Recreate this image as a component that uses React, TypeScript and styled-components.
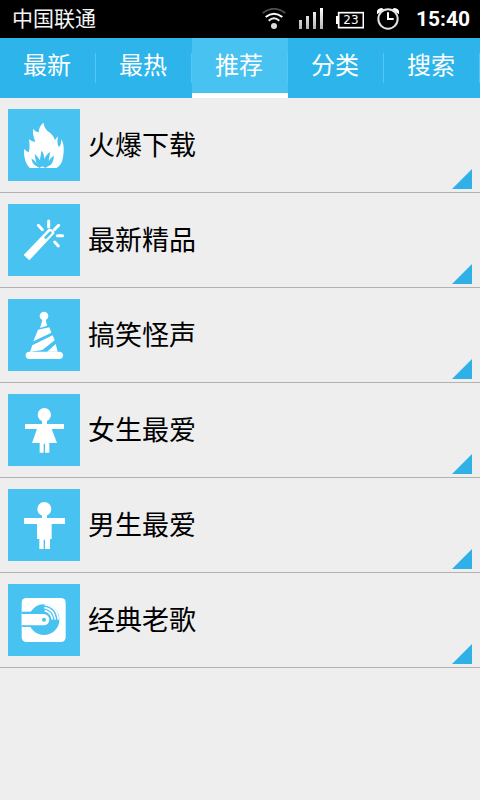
import React, { useState } from "react";
import styled, { createGlobalStyle } from "styled-components";

const GlobalStyle = createGlobalStyle`
  *, *::before, *::after { box-sizing: border-box; }
  body {
    margin: 0;
    background: #eeeeee;
    color: #000000;
    font-family: Roboto, "Noto Sans CJK SC", sans-serif;
  }
`;

const Page = styled.div`
  display: flex;
  flex-direction: column;
  min-height: 100vh;
`;

const StatusBar = styled.header`
  display: flex;
  align-items: center;
  justify-content: space-between;
  height: 38px;
  padding: 0 10px 0 12px;
  background: #000000;
  color: #f4f4f4;
`;

const Carrier = styled.span`
  font-size: 21px;
  line-height: 36px;
`;

const StatusIcons = styled.div`
  display: flex;
  align-items: center;
  gap: 13px;
`;

const StatusIcon = styled.svg<{ $width: number }>`
  display: block;
  width: ${(p) => p.$width}px;
  height: 22px;
`;

const Clock = styled.time`
  margin-left: 4px;
  font-family: Roboto, "Liberation Sans", sans-serif;
  font-size: 21px;
  line-height: 40px;
  font-weight: 700;
  color: #ffffff;
`;

const TabBar = styled.nav`
  display: grid;
  grid-template-columns: repeat(5, 1fr);
  height: 60px;
  background: #2db5eb;
`;

const Tab = styled.button<{ $active: boolean }>`
  position: relative;
  border: 0;
  border-bottom: 5px solid ${(p) => (p.$active ? "#ffffff" : "transparent")};
  padding: 0 2px 0 0;
  background: ${(p) => (p.$active ? "#48c2f1" : "#2db5eb")};
  color: #ffffff;
  font-family: inherit;
  font-size: 24px;
  line-height: 54px;
  cursor: pointer;

  &::after {
    content: "";
    position: absolute;
    top: 15px;
    right: 0;
    width: 1px;
    height: 30px;
    background: #56c6f2;
  }
`;

const List = styled.ul`
  margin: 0;
  padding: 0;
  list-style: none;
`;

const Row = styled.li`
  border-bottom: 1px solid #b2b2b2;
`;

const RowLink = styled.a`
  position: relative;
  display: flex;
  align-items: center;
  gap: 8px;
  height: 94px;
  padding: 0 8px;
  color: #000000;
  text-decoration: none;
`;

const Tile = styled.svg`
  flex: none;
  width: 72px;
  height: 72px;
  background: #48c2f1;
`;

const RowTitle = styled.span`
  font-size: 27px;
  line-height: 40px;
  padding-top: 1px;
`;

const Corner = styled.span`
  position: absolute;
  right: 8px;
  bottom: 3px;
  width: 20px;
  height: 20px;
  background: #2fb0e6;
  clip-path: polygon(100% 0, 100% 100%, 0 100%);
`;

const blue = "#48c2f1";

const flame = (
  <>
    <path
      fill="#fff"
      d="M66 177C55 167 47 150 48 119C53 124 57 128 62 129C66 121 65 104 63 91C70 96 76 99 82 98C76 84 74 71 75 60C81 66 87 70 92 70C92 58 98 47 107 41C108 55 114 62 124 70C134 78 139 85 140 94L150 82C147 102 149 109 153 114C159 109 160 99 159 91C168 101 169 123 165 145C163 160 157 171 146 177Z"
    />
    <path
      fill={blue}
      d="M84 170C77 168 71 158 71 149C77 151 82 157 85 162C82 149 81 143 80 136C87 140 92 147 95 154C98 143 99 134 100 125C106 130 109 140 109 151C112 141 119 133 127 129C124 139 124 148 122 157C127 148 132 143 138 140C136 160 130 168 121 171L112 177L103 172L94 177Z"
    />
  </>
);

const wand = (
  <>
    <path fill="#fff" d="M47 153L121 76Q126 72 131 76L137 82Q141 87 137 91L64 169Z" />
    <path
      d="M111 100L126 85Q130 82 129 87L115 102Q111 104 111 100Z"
      fill="#fff"
      stroke={blue}
      strokeWidth="4"
    />
    <path
      d="M122 51V69M91 64L103 77M152 64L139 77M148 95H164M140 114L151 126"
      fill="none"
      stroke="#fff"
      strokeWidth="9"
      strokeLinecap="round"
    />
  </>
);

const partyHat = (
  <>
    <circle cx="108" cy="51" r="13" fill="#fff" />
    <path
      fill="#fff"
      d="M104 61H113L117 80L96 87ZM90 92L124 85L130 101L76 127ZM73 139L134 109L140 124L103 153L66 159ZM121 155L143 135L149 158H117Z"
    />
    <rect x="53" y="158" width="112" height="22" rx="11" fill="#fff" />
  </>
);

const girl = (
  <>
    <circle cx="109" cy="62" r="20" fill="#fff" />
    <path
      fill="#fff"
      d="M102 77H117V90H168V105H131L147 147H124V176H111V149H107V176H95V147H72L87 105H51V90H102Z"
    />
  </>
);

const boy = (
  <>
    <circle cx="109" cy="60" r="21" fill="#fff" />
    <path
      fill="#fff"
      d="M102 77H117V87H171V105H131V150H126V180H111V152H107V180H94V150H87V105H48V87H102Z"
    />
  </>
);

const turntable = (
  <>
    <rect x="41" y="42" width="132" height="132" rx="14" fill="#fff" />
    <circle cx="108" cy="107" r="46" fill={blue} />
    <path fill={blue} d="M41 83H80V129H41Z" />
    <path fill="#fff" d="M41 90H107A17 17 0 0 1 107 124H41Z" />
    <circle cx="108" cy="107" r="6" fill={blue} />
    <path
      d="M110 80Q130 84 133 107M109 71Q138 75 142 107M110 62Q147 67 151 107"
      fill="none"
      stroke="#fff"
      strokeWidth="5"
    />
  </>
);

const rows = [
  { title: "火爆下载", art: flame },
  { title: "最新精品", art: wand },
  { title: "搞笑怪声", art: partyHat },
  { title: "女生最爱", art: girl },
  { title: "男生最爱", art: boy },
  { title: "经典老歌", art: turntable },
];

const tabs = ["最新", "最热", "推荐", "分类", "搜索"];

const WifiIcon = () => (
  <StatusIcon $width={24} viewBox="21 24 72 66" aria-label="Wi-Fi">
    <g fill="none" strokeWidth="6">
      <path d="M23 39Q57 14 91 39" stroke="#4c4c4c" />
      <path d="M32 51Q57 31 82 51" stroke="#fff" />
      <path d="M41 62Q57 48 73 62" stroke="#eee" />
    </g>
    <circle cx="57" cy="78" r="9" fill="#ddd" />
  </StatusIcon>
);

const SignalIcon = () => (
  <StatusIcon $width={24} viewBox="135 24 72 66" aria-label="信号">
    <defs>
      <linearGradient id="bars" x1="0" y1="24" x2="0" y2="87" gradientUnits="userSpaceOnUse">
        <stop offset="0" stopColor="#fff" />
        <stop offset="1" stopColor="#b4b4b4" />
      </linearGradient>
    </defs>
    <path
      fill="url(#bars)"
      d="M135 60h9v27h-9zM156 48h9v39h-9zM177 36h9v51h-9zM198 24h9v63h-9z"
    />
  </StatusIcon>
);

const BatteryIcon = () => (
  <StatusIcon $width={28} viewBox="243 24 84 66" aria-label="电量 23">
    <path fill="#fff" d="M243 48H249V72H243Z" />
    <rect x="251" y="38" width="74" height="45" fill="none" stroke="#fff" strokeWidth="5" />
    <text
      x="288"
      y="73"
      textAnchor="middle"
      fill="#fff"
      fontFamily="DejaVu Sans, sans-serif"
      fontSize="36"
    >
      23
    </text>
  </StatusIcon>
);

const AlarmIcon = () => (
  <StatusIcon $width={22} viewBox="366 24 66 66" aria-label="闹钟">
    <path fill="#fff" d="M366 43V33Q369 25 381 24L388 29ZM432 43V33Q429 25 417 24L410 29Z" />
    <circle cx="399" cy="57" r="29" fill="#000" stroke="#e4e4e4" strokeWidth="6" />
    <path d="M399 37V57H416" fill="none" stroke="#fff" strokeWidth="6" />
  </StatusIcon>
);

export default function App() {
  const [active, setActive] = useState(2);

  return (
    <Page>
      <GlobalStyle />
      <StatusBar>
        <Carrier>中国联通</Carrier>
        <StatusIcons>
          <WifiIcon />
          <SignalIcon />
          <BatteryIcon />
          <AlarmIcon />
          <Clock>15:40</Clock>
        </StatusIcons>
      </StatusBar>
      <TabBar>
        {tabs.map((label, i) => (
          <Tab
            key={label}
            type="button"
            $active={i === active}
            aria-current={i === active ? "page" : undefined}
            onClick={() => setActive(i)}
          >
            {label}
          </Tab>
        ))}
      </TabBar>
      <main>
        <List>
          {rows.map((row) => (
            <Row key={row.title}>
              <RowLink href="#">
                <Tile viewBox="0 0 216 216" aria-hidden="true">
                  {row.art}
                </Tile>
                <RowTitle>{row.title}</RowTitle>
                <Corner />
              </RowLink>
            </Row>
          ))}
        </List>
      </main>
    </Page>
  );
}
